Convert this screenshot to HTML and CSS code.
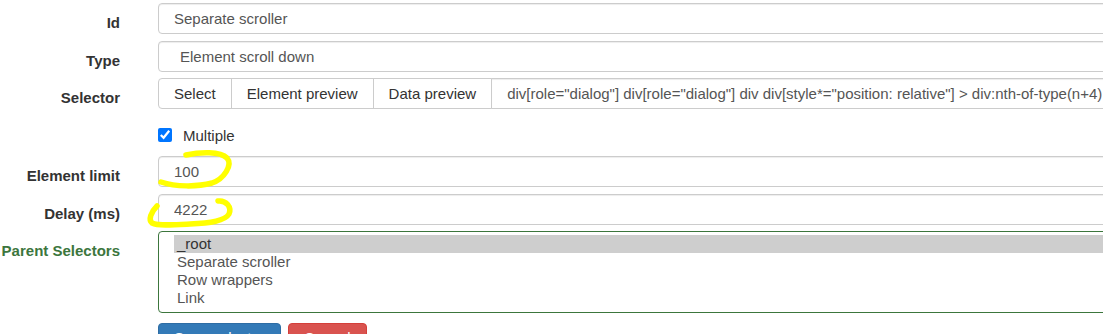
FILE: index.html
```html
<!DOCTYPE html>
<html lang="en">
<head>
    <meta charset="UTF-8">
    <meta name="viewport" content="width=device-width, initial-scale=1.0">
    <title>Edit selector</title>
    <link rel="stylesheet" href="styles.css">
</head>
<body>

    <div class="page">
        <form class="form-horizontal">
            <div class="form-group">
                <label class="control-label" for="selectorId">Id</label>
                <div class="control">
                    <input type="text" class="form-control" id="selectorId" value="Separate scroller">
                </div>
            </div>

            <div class="form-group">
                <label class="control-label" for="selectorType">Type</label>
                <div class="control">
                    <select class="form-control type-select" id="selectorType">
                        <option>Element scroll down</option>
                    </select>
                </div>
            </div>

            <div class="form-group">
                <label class="control-label" for="selectorCss">Selector</label>
                <div class="control">
                    <div class="input-group">
                        <button type="button" class="btn btn-default">Select</button>
                        <button type="button" class="btn btn-default">Element preview</button>
                        <button type="button" class="btn btn-default">Data preview</button>
                        <input type="text" class="form-control" id="selectorCss" value='div[role="dialog"] div[role="dialog"] div div[style*="position: relative"] > div:nth-of-type(n+4)'>
                    </div>
                </div>
            </div>

            <div class="form-group">
                <span></span>
                <div class="control">
                    <label class="checkbox">
                        <input type="checkbox" checked>
                        <span>Multiple</span>
                    </label>
                </div>
            </div>

            <div class="form-group">
                <label class="control-label" for="elementLimit">Element limit</label>
                <div class="control">
                    <input type="text" class="form-control" id="elementLimit" value="100">
                </div>
            </div>

            <div class="form-group">
                <label class="control-label" for="delay">Delay (ms)</label>
                <div class="control">
                    <input type="text" class="form-control" id="delay" value="4222">
                </div>
            </div>

            <div class="form-group has-success">
                <label class="control-label">Parent Selectors</label>
                <div class="control">
                    <div class="listbox">
                        <div class="option selected">_root</div>
                        <div class="option">Separate scroller</div>
                        <div class="option">Row wrappers</div>
                        <div class="option">Link</div>
                    </div>
                </div>
            </div>

            <div class="form-group">
                <span></span>
                <div class="control actions">
                    <button type="button" class="btn btn-primary">Save selector</button>
                    <button type="button" class="btn btn-danger">Cancel</button>
                </div>
            </div>
        </form>

        <!-- пометки маркером поверх формы -->
        <svg class="marker" width="1103" height="334" viewBox="0 0 1103 334">
            <path d="M186 155 C200 152, 220 151, 227 158 C233 165, 224 179, 212 183 C197 187, 176 187, 161 182" />
            <path d="M218 201 C226 200, 232 207, 229 214 C225 221, 210 223, 190 224 C172 225, 158 226, 152 223 C148 220, 151 212, 157 206" />
        </svg>
    </div>

</body>
</html>
```

FILE: styles.css
```css
body {
    margin: 0;
    padding: 0;
    font-family: "Liberation Sans", Arial, sans-serif;
    font-size: 15px;
    color: #333;
    background-color: #fff;
    overflow: hidden;
}

.page {
    position: relative;
    width: 1103px;
    height: 334px;
    overflow: hidden;
}

.form-horizontal {
    width: 1150px;
    padding-top: 3px;
}

.form-group {
    display: grid;
    grid-template-columns: 120px 1fr;
    column-gap: 38px;
    margin-bottom: 6.5px;
}

.control-label {
    text-align: right;
    font-weight: bold;
    padding-top: 9px;
    line-height: 21px;
}

.form-control {
    display: block;
    width: 100%;
    height: 31px;
    padding: 0 15px;
    box-sizing: border-box;
    border: 1px solid #ccc;
    border-radius: 4px;
    box-shadow: inset 0 1px 1px rgba(0,0,0,0.075);
    background-color: #fff;
    font: inherit;
    color: #555;
    outline: none;
}

.type-select {
    appearance: none;
    -webkit-appearance: none;
    padding-left: 21px;
}

/* Группа кнопок перед полем селектора */
.input-group {
    display: flex;
}

.input-group .form-control {
    flex: 1;
    margin-left: -1px;
    border-radius: 0 4px 4px 0;
}

.btn {
    height: 31px;
    padding: 0 15px;
    border: 1px solid transparent;
    border-radius: 4px;
    font: inherit;
    cursor: pointer;
    white-space: nowrap;
}

.btn-default {
    background-color: #fff;
    border-color: #ccc;
    color: #333;
    border-radius: 0;
    margin-left: -1px;
}

.input-group .btn-default:first-child {
    margin-left: 0;
    border-radius: 4px 0 0 4px;
}

.checkbox {
    display: flex;
    align-items: center;
    gap: 11px;
    height: 34px;
    padding-top: 5px;
    box-sizing: border-box;
}

.checkbox input {
    width: 14px;
    height: 14px;
    margin: 0;
    accent-color: #0075ff;
}

/* Список родительских селекторов */
.has-success .control-label {
    color: #3c763d;
}

.listbox {
    height: 82px;
    box-sizing: border-box;
    padding: 3px 0 5px 15px;
    border: 1px solid #3c763d;
    border-radius: 4px;
    color: #555;
}

.option {
    line-height: 18px;
    padding-left: 3px;
}

.option.selected {
    background-color: #cecece;
    color: #333;
}

.actions {
    display: flex;
    align-items: flex-start;
    gap: 7px;
    padding-top: 3.5px;
}

.actions .btn {
    height: auto;
    padding: 6px 15px 12px;
    line-height: 15px;
    color: #fff;
}

.btn-primary {
    background-color: #337ab7;
    border-color: #2e6da4;
}

.btn-danger {
    background-color: #d9534f;
    border-color: #d43f3a;
}

.marker {
    position: absolute;
    left: 0;
    top: 0;
    pointer-events: none;
}

.marker path {
    fill: none;
    stroke: #ffff00;
    stroke-width: 5.5;
    stroke-linecap: round;
    stroke-linejoin: round;
}
```
